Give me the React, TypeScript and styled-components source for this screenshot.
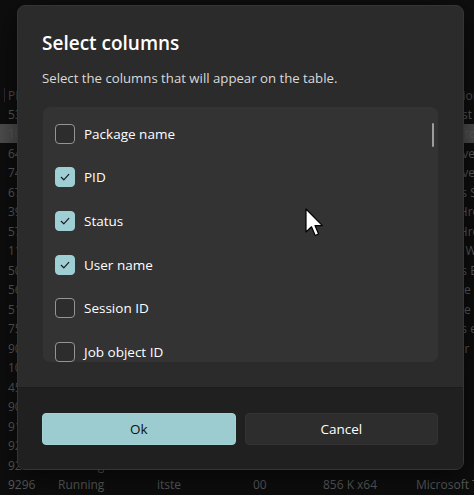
import styled, { createGlobalStyle } from 'styled-components';

const GlobalStyle = createGlobalStyle`
  html, body {
    margin: 0;
    padding: 0;
    background: #0d0d0d;
    overflow: hidden;
  }
  * {
    box-sizing: border-box;
  }
`;

type Process = {
  pid: string;
  status: string;
  user: string;
  session: string;
  memory: string;
  arch: string;
  description: string;
};

const processes: Process[] = [
  { pid: '5316', status: 'Running', user: 'itste', session: '00', memory: '1 204 K', arch: 'x64', description: 'Shell Host (' },
  { pid: '1088', status: 'Running', user: 'SYSTEM', session: '00', memory: '2 116 K', arch: 'x64', description: 'Microsofton' },
  { pid: '6420', status: 'Running', user: 'itste', session: '00', memory: '4 580 K', arch: 'x64', description: 'Interactive' },
  { pid: '7412', status: 'Running', user: 'itste', session: '00', memory: '980 K', arch: 'x64', description: 'Interactive' },
  { pid: '6748', status: 'Running', user: 'itste', session: '00', memory: '3 012 K', arch: 'x64', description: 'Windows Ser' },
  { pid: '3924', status: 'Running', user: 'SYSTEM', session: '00', memory: '1 840 K', arch: 'x64', description: 'Service Hro' },
  { pid: '5724', status: 'Running', user: 'itste', session: '00', memory: '6 224 K', arch: 'x64', description: 'Service Hro' },
  { pid: '1160', status: 'Running', user: 'SYSTEM', session: '00', memory: '720 K', arch: 'x64', description: 'Desktop W' },
  { pid: '5032', status: 'Running', user: 'itste', session: '00', memory: '2 980 K', arch: 'x64', description: 'Windows E' },
  { pid: '5628', status: 'Running', user: 'itste', session: '00', memory: '1 112 K', arch: 'x64', description: 'Console e' },
  { pid: '5196', status: 'Running', user: 'itste', session: '00', memory: '840 K', arch: 'x64', description: 'Console e' },
  { pid: '7580', status: 'Running', user: 'itste', session: '00', memory: '5 604 K', arch: 'x64', description: 'Windows ex' },
  { pid: '9012', status: 'Running', user: 'itste', session: '00', memory: '1 436 K', arch: 'x64', description: 'Secure ur' },
  { pid: '1044', status: 'Running', user: 'SYSTEM', session: '00', memory: '2 200 K', arch: 'x64', description: 'Search h' },
  { pid: '4556', status: 'Running', user: 'itste', session: '00', memory: '3 320 K', arch: 'x64', description: 'Sync D' },
  { pid: '9064', status: 'Running', user: 'itste', session: '00', memory: '912 K', arch: 'x64', description: 'Office T' },
  { pid: '9104', status: 'Running', user: 'itste', session: '00', memory: '1 008 K', arch: 'x64', description: 'Office T' },
  { pid: '9212', status: 'Running', user: 'itste', session: '00', memory: '744 K', arch: 'x64', description: 'Office T' },
  { pid: '9244', status: 'Running', user: 'itste', session: '00', memory: '1 276 K', arch: 'x64', description: 'Office T' },
  { pid: '9296', status: 'Running', user: 'itste', session: '00', memory: '856 K', arch: 'x64', description: 'Microsoft Teams' },
];

const columns = [
  { label: 'Package name', checked: false },
  { label: 'PID', checked: true },
  { label: 'Status', checked: true },
  { label: 'User name', checked: true },
  { label: 'Session ID', checked: false },
  { label: 'Job object ID', checked: false },
  { label: 'CPU', checked: true },
  { label: 'Memory', checked: true },
];

const Screen = styled.div`
  position: relative;
  width: 474px;
  height: 495px;
  overflow: hidden;
  background: #0e0e0e;
  font-family: 'Open Sans', 'Noto Sans', sans-serif;
`;

const ProcessTable = styled.div`
  padding-top: 86px;
  display: flex;
  flex-direction: column;
`;

const TableRow = styled.div<{ $selected?: boolean; $header?: boolean }>`
  display: grid;
  grid-template-columns: 50px 99px 96px 70px 34px 59px 1fr;
  align-items: center;
  height: ${({ $header }) => ($header ? '18.25px' : '19.5px')};
  padding-left: 8px;
  font-size: 12px;
  white-space: nowrap;
  overflow: hidden;
  color: ${({ $header }) => ($header ? '#4e4e4e' : '#5a5e5e')};
  background: ${({ $selected }) => ($selected ? '#4f4f4f' : 'transparent')};
  position: relative;

  ${({ $header }) =>
    $header &&
    `
    &::before {
      content: '';
      position: absolute;
      left: 4px;
      top: 2px;
      bottom: 2px;
      width: 1px;
      background: #2a2a2a;
    }
  `}
`;

const Cell = styled.span`
  overflow: visible;
`;

const TaskbarEdge = styled.div`
  height: 4px;
  margin-top: 1px;
  background: #0b1618;
  border-top: 1px solid #163033;
`;

const Dialog = styled.div`
  position: absolute;
  left: 17px;
  top: 5px;
  width: 447px;
  height: 465px;
  display: flex;
  flex-direction: column;
  background: #2b2b2b;
  border: 1px solid #353535;
  border-radius: 8px;
  overflow: hidden;
  box-shadow: 0 8px 30px rgba(0, 0, 0, 0.6);
`;

const DialogBody = styled.div`
  flex: 1;
  display: flex;
  flex-direction: column;
  padding: 23px 25px 0 24px;
`;

const Title = styled.h2`
  margin: 0;
  font-size: 19px;
  line-height: 28px;
  font-weight: 600;
  color: #ffffff;
`;

const Subtitle = styled.p`
  margin: 11px 0 0;
  font-size: 13.2px;
  line-height: 20px;
  color: #dadada;
`;

const ColumnList = styled.div`
  position: relative;
  margin-top: 19px;
  margin-left: 1px;
  height: 255px;
  overflow: hidden;
  background: #333333;
  border-radius: 7px;
  padding-top: 5px;
`;

const ScrollThumb = styled.div`
  position: absolute;
  right: 4px;
  top: 16px;
  width: 2px;
  height: 24px;
  border-radius: 1px;
  background: #9c9c9c;
`;

const ColumnRow = styled.label`
  display: flex;
  align-items: center;
  gap: 9px;
  height: 43.6px;
  padding-left: 12px;
  font-size: 13.5px;
  color: #ffffff;
`;

const Box = styled.span<{ $checked: boolean }>`
  width: 20px;
  height: 20px;
  flex: none;
  display: flex;
  align-items: center;
  justify-content: center;
  border-radius: 4px;
  border: 1px solid ${({ $checked }) => ($checked ? '#9ecfd4' : '#949494')};
  background: ${({ $checked }) => ($checked ? '#9ecfd4' : '#2d2d2d')};
`;

const Footer = styled.div`
  display: grid;
  grid-template-columns: 1fr 1fr;
  gap: 9px;
  padding: 25px 25px 24px 24px;
  background: #202020;
  border-top: 1px solid #1c1c1c;
`;

const Button = styled.button<{ $primary?: boolean }>`
  height: 32px;
  border-radius: 4px;
  font-family: inherit;
  font-size: 13.5px;
  cursor: default;
  border: 1px solid ${({ $primary }) => ($primary ? '#a2d2d6' : '#333333')};
  background: ${({ $primary }) => ($primary ? '#9ccbd0' : '#2d2d2d')};
  color: ${({ $primary }) => ($primary ? '#111111' : '#ffffff')};
`;

const Cursor = styled.svg`
  position: absolute;
  left: 305px;
  top: 208px;
`;

const Check = () => (
  <svg width="12" height="12" viewBox="0 0 12 12">
    <polyline
      points="2.2,6.3 4.8,8.8 9.8,3.4"
      fill="none"
      stroke="#1b1b1b"
      strokeWidth="1.2"
      strokeLinecap="round"
      strokeLinejoin="round"
    />
  </svg>
);

export default function App() {
  return (
    <>
      <GlobalStyle />
      <Screen>
        <ProcessTable>
          <TableRow $header>
            <Cell>PID</Cell>
            <Cell>Status</Cell>
            <Cell>User name</Cell>
            <Cell>Session</Cell>
            <Cell>Memory</Cell>
            <Cell>Arch</Cell>
            <Cell>Description</Cell>
          </TableRow>
          {processes.map((p, i) => (
            <TableRow key={p.pid + i} $selected={i === 1}>
              <Cell>{p.pid}</Cell>
              <Cell>{p.status}</Cell>
              <Cell>{p.user}</Cell>
              <Cell>{p.session}</Cell>
              <Cell>{p.memory}</Cell>
              <Cell>{p.arch}</Cell>
              <Cell>{p.description}</Cell>
            </TableRow>
          ))}
          <TaskbarEdge />
        </ProcessTable>

        <Dialog>
          <DialogBody>
            <Title>Select columns</Title>
            <Subtitle>Select the columns that will appear on the table.</Subtitle>
            <ColumnList>
              {columns.map((c) => (
                <ColumnRow key={c.label}>
                  <Box $checked={c.checked}>{c.checked && <Check />}</Box>
                  {c.label}
                </ColumnRow>
              ))}
              <ScrollThumb />
            </ColumnList>
          </DialogBody>
          <Footer>
            <Button $primary>Ok</Button>
            <Button>Cancel</Button>
          </Footer>
        </Dialog>

        <Cursor width="20" height="30" viewBox="0 0 20 30">
          <path
            d="M1 1 L1 24 L6.5 18.8 L10.2 27.5 L13.6 26 L10 17.6 L17.4 17.6 Z"
            fill="#ffffff"
            stroke="#000000"
            strokeWidth="1.2"
            strokeLinejoin="round"
          />
        </Cursor>
      </Screen>
    </>
  );
}
